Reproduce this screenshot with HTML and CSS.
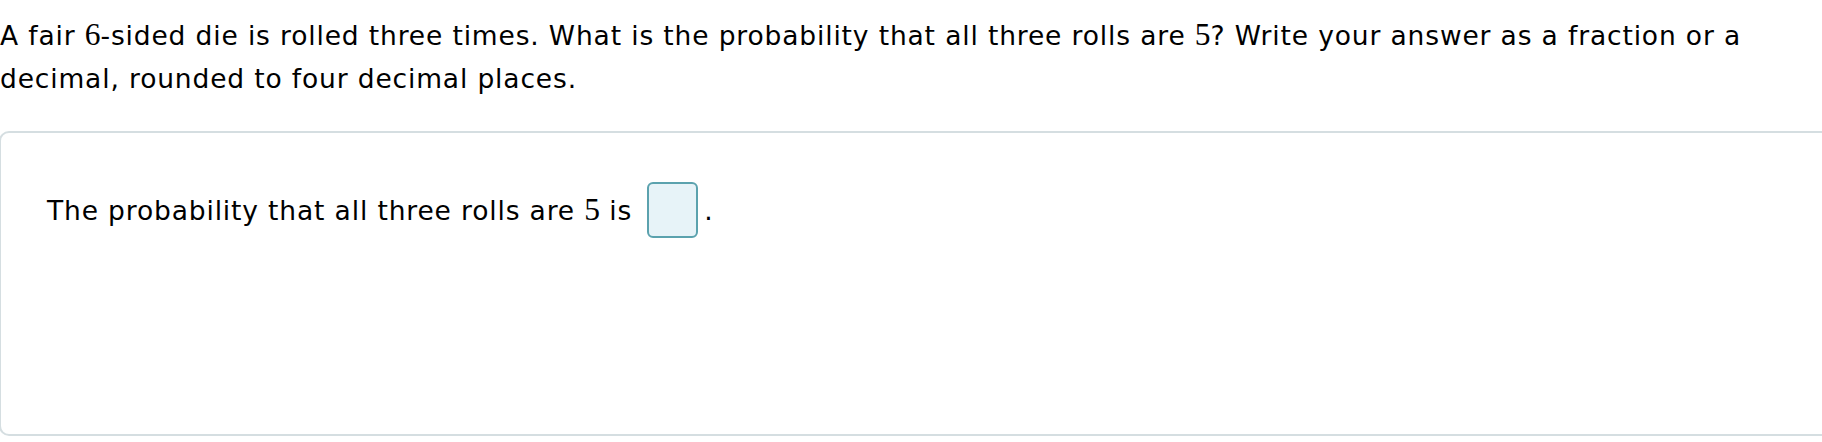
FILE: index.html
```html
<!DOCTYPE html>
<html>
<head>
<meta charset="utf-8">
<link rel="stylesheet" href="styles.css">
</head>
<body>
<div class="page">
  <p class="question">A fair <span class="math">6</span>-sided die is rolled three times. What is the probability that all three rolls are <span class="math">5</span>? Write your answer as a fraction or a decimal, rounded to four decimal places.</p>
  <div class="card">
    <div class="answer-row">
      <span class="answer-text">The probability that all three rolls are <span class="math">5</span> is</span>
      <span class="input-box"></span>
      <span class="period">.</span>
    </div>
  </div>
</div>
</body>
</html>
```
FILE: styles.css
```css
html, body {
  margin: 0;
  padding: 0;
  background: #ffffff;
}
.page {
  width: 1822px;
  height: 442px;
  overflow: hidden;
  font-family: "DejaVu Sans", Verdana, sans-serif;
  color: #000;
  font-size: 26.5px;
  letter-spacing: 0.85px;
}
.question {
  margin: 0;
  padding: 13px 0 0 0;
  width: 1800px;
  line-height: 43px;
}
.math {
  font-family: "Liberation Serif", "Times New Roman", serif;
  font-size: 31.5px;
  letter-spacing: 0;
}
.card {
  margin-top: 31px;
  margin-left: -1px;
  width: 1860px;
  height: 305px;
  box-sizing: border-box;
  border: 2px solid #d5dee1;
  border-radius: 10px;
  padding: 49px 0 0 46px;
}
.answer-row {
  display: flex;
  align-items: center;
}
.input-box {
  width: 47px;
  height: 52px;
  margin-left: 15px;
  border: 2px solid #5ba2ae;
  border-radius: 6px;
  background: #e7f3f8;
}
.period {
  margin-left: 6px;
}
```
